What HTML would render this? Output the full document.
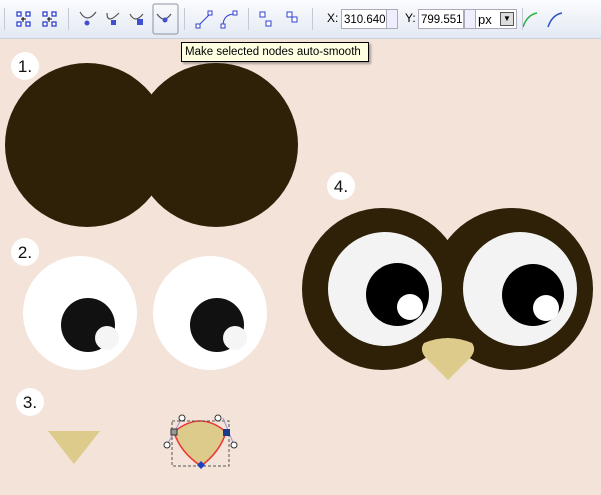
<!DOCTYPE html>
<html><head><style>
body{margin:0;width:601px;height:495px;overflow:hidden;background:#f3e3d9;font-family:"Liberation Sans",sans-serif;position:relative}
.tb{position:absolute;left:0;top:0;width:601px;height:38px;background:linear-gradient(#fbfcfe,#e3e9f3);border-bottom:1px solid #c9d1de}
.sep{position:absolute;top:8px;width:1px;height:22px;background:#c3cad6}
.inp{position:absolute;top:9px;height:20px;border:1px solid #aab;background:#fff;font-size:13px;line-height:20px;padding-left:2px;box-sizing:border-box;overflow:hidden;white-space:nowrap}
.tip{position:absolute;left:181px;top:42px;width:188px;height:20px;background:#ffffe1;border:1px solid #000;box-sizing:border-box;font-size:11.5px;line-height:18px;padding-left:3px;white-space:nowrap;overflow:hidden;box-shadow:2px 2px 2px rgba(0,0,0,.3)}
</style></head><body>
<div class="tb">
<svg width="601" height="38" style="position:absolute;left:0;top:0">
<g fill="#fff" stroke="#3040d0" stroke-width="1.3">
<rect x="17" y="12" width="4" height="4"/><rect x="26" y="12" width="4" height="4"/><rect x="17" y="22" width="4" height="4"/><rect x="26" y="22" width="4" height="4"/>
<rect x="43" y="12" width="4" height="4"/><rect x="52" y="12" width="4" height="4"/><rect x="43" y="22" width="4" height="4"/><rect x="52" y="22" width="4" height="4"/>
</g>
<path d="M23 17v5M21 19h5M49 17v5M47 19h5" stroke="#000"/>
<g fill="none" stroke="#555" stroke-width="1.2"><path d="M80 12q7 12 16 0"/><path d="M107 13q0 12 12 0"/><path d="M130 14q5 10 13 0"/><path d="M157 14q7 10 14 0"/></g>
<rect x="153" y="4" width="25" height="30" rx="2" fill="none" stroke="#8a93a3"/>
<g fill="#4050d0"><circle cx="87" cy="23" r="2.5"/><rect x="111" y="20" width="5" height="5"/><rect x="137" y="19" width="6" height="6"/><circle cx="165" cy="20" r="2.5"/></g>
<g stroke="#3040d0" fill="#fff"><path d="M198 26l12-12M223 26q0-12 12-12" fill="none"/><rect x="196" y="24" width="4" height="4"/><rect x="208" y="11" width="4" height="4"/><rect x="221" y="24" width="4" height="4"/><rect x="233" y="11" width="4" height="4"/>
<rect x="260" y="12" width="5" height="5"/><rect x="266" y="21" width="5" height="5"/><rect x="287" y="12" width="5" height="5"/><rect x="292" y="17" width="5" height="5"/></g>
<path d="M548 27q4-12 14-14" stroke="#3050c0" fill="none" stroke-width="1.5"/>
<path d="M523 27q4-12 14-14" stroke="#30b040" fill="none" stroke-width="1.5"/>
</svg>
<div class="sep" style="left:4px"></div><div class="sep" style="left:68px"></div><div class="sep" style="left:184px"></div><div class="sep" style="left:248px"></div><div class="sep" style="left:312px"></div><div class="sep" style="left:522px;left:522px"></div>
<span style="position:absolute;left:327px;top:11px;font-size:12px">X:</span>
<div class="inp" style="left:341px;width:46px;font-size:11.5px">310.640</div>
<div class="inp" style="left:386px;width:12px;background:#eef"></div>
<span style="position:absolute;left:405px;top:11px;font-size:12px">Y:</span>
<div class="inp" style="left:418px;width:46px;font-size:11.5px">799.551</div>
<div class="inp" style="left:464px;width:12px;background:#eef"></div>
<div class="inp" style="left:475px;width:42px">px</div>
<div style="position:absolute;left:500px;top:12px;width:14px;height:14px;background:#ddd;border:1px solid #555;box-sizing:border-box;font-size:8px;text-align:center;line-height:12px">▼</div>
</div>
<div class="tip">Make selected nodes auto-smooth</div>
<svg width="601" height="457" style="position:absolute;left:0;top:38px">
<g transform="translate(0,-38)">
<g fill="#2e2107"><circle cx="87" cy="145" r="82"/><circle cx="216" cy="145" r="82"/>
<circle cx="383" cy="289" r="81"/><circle cx="512" cy="289" r="81"/></g>
<g fill="#fff"><circle cx="80" cy="313" r="57"/><circle cx="210" cy="313" r="57"/>
<circle cx="25" cy="66" r="14"/><circle cx="25" cy="252" r="14"/><circle cx="30" cy="402" r="14"/><circle cx="341" cy="186" r="14"/></g>
<g fill="#f3f3f3"><circle cx="385" cy="289" r="57"/><circle cx="520" cy="289" r="57"/></g>
<g fill="#111"><circle cx="88" cy="325" r="27"/><circle cx="217" cy="325" r="27"/></g>
<g fill="#000"><circle cx="397.5" cy="294.5" r="31.5"/><circle cx="533" cy="295" r="31"/></g>
<g fill="#f5f5f5"><circle cx="107" cy="338" r="12"/><circle cx="235" cy="338" r="12"/></g>
<g fill="#fff"><circle cx="410" cy="307" r="13"/><circle cx="546" cy="308" r="13"/></g>
<g font-size="17" fill="#111" text-anchor="middle"><text x="25" y="72">1.</text><text x="25" y="258">2.</text><text x="30" y="408">3.</text><text x="341" y="192">4.</text></g>
<path d="M48 431H100L74 464Z" fill="#dccb8a"/>
<path d="M424 343Q448 333 472 343Q477 350 470 358L448 380L426 358Q419 350 424 343Z" fill="#dccb8a"/>
<path d="M174 432Q200 410 226 432Q220 452 201 466Q180 452 174 432Z" fill="#dccb8a" stroke="#e33" stroke-width="1.5"/>
<rect x="172" y="421" width="57" height="45" fill="none" stroke="#555" stroke-dasharray="3,2"/>
<g stroke="#99c" fill="none"><path d="M167 445L182 418M223 418L234 445"/></g>
<g fill="#fff" stroke="#333"><circle cx="182" cy="418" r="3"/><circle cx="167" cy="445" r="3"/><circle cx="218" cy="418" r="3"/><circle cx="234" cy="445" r="3"/></g>
<rect x="171" y="429" width="6" height="6" fill="#999" stroke="#333"/><rect x="223" y="429" width="7" height="7" fill="#1a3a8a"/>
<path d="M201 461l4 4-4 4-4-4z" fill="#2040c0"/>
</g></svg>
</body></html>
